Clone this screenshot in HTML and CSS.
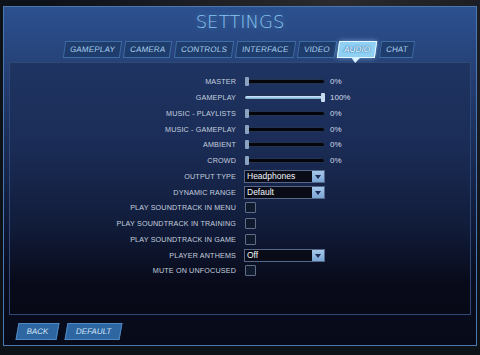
FILE: index.html
```html
<!DOCTYPE html>
<html lang="en">
<head>
  <meta charset="UTF-8" />
  <title>Settings</title>
  <link rel="stylesheet" href="styles.css">
</head>
<body>

  <div class="frame">
    <h1 class="title">SETTINGS</h1>

    <div class="tabs">
      <div class="tab">GAMEPLAY</div>
      <div class="tab">CAMERA</div>
      <div class="tab">CONTROLS</div>
      <div class="tab">INTERFACE</div>
      <div class="tab">VIDEO</div>
      <div class="tab active">AUDIO</div>
      <div class="tab">CHAT</div>
    </div>

    <div class="panel">
      <div class="rows">
        <div class="label">MASTER</div>
        <div class="ctrl"><div class="slider"><div class="fill" style="width:0%"></div><div class="knob"></div></div><span class="pct">0%</span></div>

        <div class="label">GAMEPLAY</div>
        <div class="ctrl"><div class="slider full"><div class="fill" style="width:100%"></div><div class="knob"></div></div><span class="pct">100%</span></div>

        <div class="label">MUSIC - PLAYLISTS</div>
        <div class="ctrl"><div class="slider"><div class="fill" style="width:0%"></div><div class="knob"></div></div><span class="pct">0%</span></div>

        <div class="label">MUSIC - GAMEPLAY</div>
        <div class="ctrl"><div class="slider"><div class="fill" style="width:0%"></div><div class="knob"></div></div><span class="pct">0%</span></div>

        <div class="label">AMBIENT</div>
        <div class="ctrl"><div class="slider"><div class="fill" style="width:0%"></div><div class="knob"></div></div><span class="pct">0%</span></div>

        <div class="label">CROWD</div>
        <div class="ctrl"><div class="slider"><div class="fill" style="width:0%"></div><div class="knob"></div></div><span class="pct">0%</span></div>

        <div class="label">OUTPUT TYPE</div>
        <div class="ctrl"><div class="select"><span>Headphones</span><div class="arrow"></div></div></div>

        <div class="label">DYNAMIC RANGE</div>
        <div class="ctrl"><div class="select"><span>Default</span><div class="arrow"></div></div></div>

        <div class="label">PLAY SOUNDTRACK IN MENU</div>
        <div class="ctrl"><div class="check"></div></div>

        <div class="label">PLAY SOUNDTRACK IN TRAINING</div>
        <div class="ctrl"><div class="check"></div></div>

        <div class="label">PLAY SOUNDTRACK IN GAME</div>
        <div class="ctrl"><div class="check"></div></div>

        <div class="label">PLAYER ANTHEMS</div>
        <div class="ctrl"><div class="select"><span>Off</span><div class="arrow"></div></div></div>

        <div class="label">MUTE ON UNFOCUSED</div>
        <div class="ctrl"><div class="check"></div></div>
      </div>
    </div>

    <div class="footer">
      <div class="btn back">BACK</div>
      <div class="btn">DEFAULT</div>
    </div>
  </div>

</body>
</html>
```

FILE: styles.css
```css
html, body {
  margin: 0;
  height: 355px;
  overflow: hidden;
}

body {
  background: radial-gradient(ellipse at 70% 0%, #2a2a30 0%, #0d1218 60%) #0a0f16;
  font-family: 'Liberation Sans', Arial, sans-serif;
  padding: 6px 3px 0 3px;
  box-sizing: border-box;
}

.frame {
  height: 340px;
  box-sizing: border-box;
  border: 1px solid #4c77ad;
  background: linear-gradient(to bottom, #2c5190 0%, #253f74 20%, #132146 55%, #090d1f 80%, #070a18 100%);
  padding: 0 5px;
  display: flex;
  flex-direction: column;
}

.title {
  margin: 0;
  height: 34px;
  line-height: 29px;
  text-align: center;
  font-family: 'DejaVu Sans', sans-serif;
  font-weight: 200;
  font-size: 18px;
  letter-spacing: 0;
  color: #86c4ee;
  text-shadow: 0 0 6px rgba(120, 190, 240, 0.5);
}

.tabs {
  display: flex;
  justify-content: center;
  gap: 3px;
  height: 17px;
  margin-left: -2px;
  position: relative;
  z-index: 1;
}

.tab {
  transform: skewX(-8deg);
  background: #1e3d6c;
  border: 1px solid #3e6ca4;
  color: #a9cdec;
  font-size: 8px;
  line-height: 15px;
  padding: 0 5px;
  letter-spacing: 0.2px;
}

.tab.active {
  position: relative;
  background: #8fd0f3;
  border-color: #e8f8ff;
  color: #ffffff;
  text-shadow: 0 0 1px #2466a6, 0 0 2px #2466a6;
  box-shadow: 0 0 5px rgba(160, 220, 255, 0.6);
}

.tab.active::after {
  content: "";
  position: absolute;
  left: 50%;
  bottom: -6px;
  margin-left: -5px;
  border-left: 5px solid transparent;
  border-right: 5px solid transparent;
  border-top: 6px solid #d8f2ff;
}

.panel {
  margin-top: 4px;
  height: 253px;
  box-sizing: border-box;
  border: 1px solid #2f4876;
  background: linear-gradient(to bottom, #1f3462 0%, #1b2d58 30%, #111c3a 65%, #080a19 88%, #070917 100%);
  padding-top: 11px;
}

.rows {
  display: grid;
  grid-template-columns: 226px 1fr;
  grid-auto-rows: 15.75px;
  column-gap: 8px;
  align-items: center;
}

.label {
  text-align: right;
  font-size: 7.2px;
  color: #c4cfdf;
  letter-spacing: 0.15px;
}

.ctrl {
  display: flex;
  align-items: center;
  gap: 5px;
}

.slider {
  position: relative;
  width: 81px;
  height: 5px;
  background: #03050b;
  border: 1px solid #22324f;
  border-radius: 3px;
  box-sizing: border-box;
}

.fill {
  height: 100%;
  background: linear-gradient(to bottom, #d4ecff, #6fa8d8);
  border-radius: 2px;
}

.knob {
  position: absolute;
  left: 0;
  top: -3px;
  width: 4px;
  height: 9px;
  background: #8aa3c2;
  border-radius: 1px;
}

.slider.full .knob {
  left: auto;
  right: -1px;
  background: #c8dcf0;
}

.pct {
  font-size: 8px;
  color: #d3dceb;
}

.select {
  width: 81px;
  height: 13px;
  box-sizing: border-box;
  background: #090c17;
  border: 1px solid #56688a;
  display: flex;
  justify-content: space-between;
  align-items: center;
}

.select span {
  font-size: 8.5px;
  color: #f0f4fa;
  padding-left: 2px;
}

.arrow {
  width: 12px;
  height: 11px;
  background: linear-gradient(to bottom, #a6c8ea, #7aa6d4);
  position: relative;
}

.arrow::after {
  content: "";
  position: absolute;
  left: 3px;
  top: 4px;
  border-left: 3px solid transparent;
  border-right: 3px solid transparent;
  border-top: 4px solid #1c2c52;
}

.check {
  width: 11px;
  height: 11px;
  margin-left: 1px;
  box-sizing: border-box;
  background: #111a2d;
  border: 1px solid #5f6e88;
  border-radius: 1px;
}

.footer {
  display: flex;
  gap: 8px;
  padding: 8px 0 0 8px;
}

.btn {
  transform: skewX(-10deg);
  height: 17px;
  box-sizing: border-box;
  padding: 0 9px;
  background: #2d66a0;
  border: 1px solid #4f88c2;
  color: #d4e4f6;
  font-size: 8px;
  line-height: 15px;
  text-align: center;
}

.btn.back {
  width: 41px;
  padding: 0;
}
```
